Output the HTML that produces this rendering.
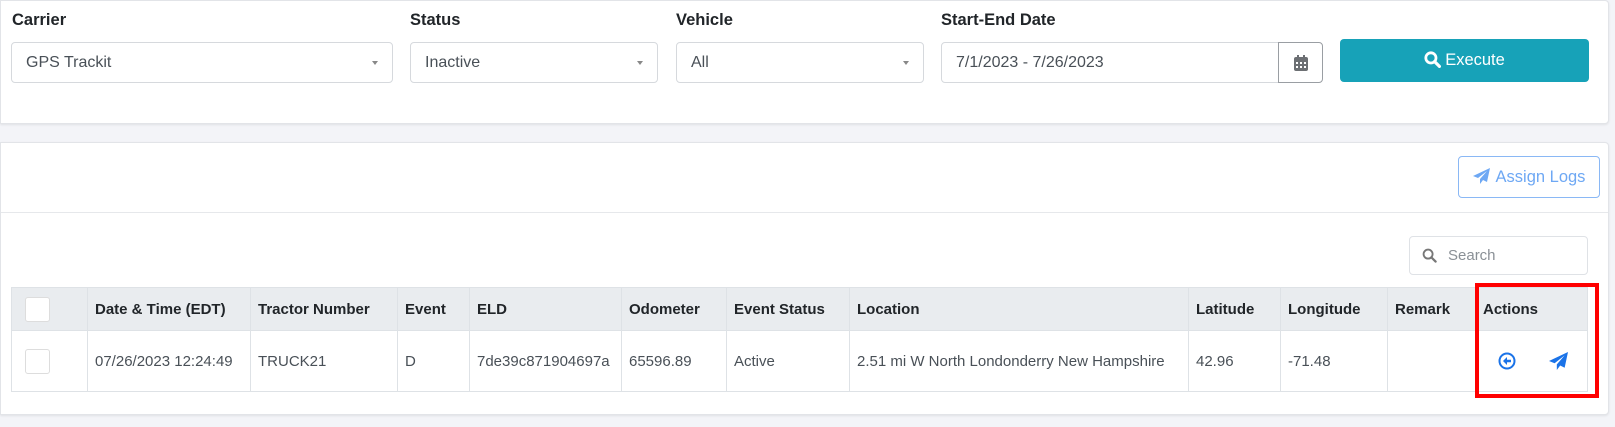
<!DOCTYPE html>
<html><head><meta charset="utf-8"><style>
*{box-sizing:border-box;margin:0;padding:0}
body{width:1615px;height:427px;background:#f3f4f8;font-family:"Liberation Sans",sans-serif;color:#212529;position:relative;overflow:hidden}
.card{position:absolute;left:0;width:1609px;background:#fff;border:1px solid #e2e4e8;border-radius:0 4px 4px 0;box-shadow:0 1px 2px rgba(0,0,0,.08)}
.lbl{position:absolute;top:10px;font-weight:bold;font-size:16.5px;color:#212529}
.sel{position:absolute;top:41px;height:41px;border:1px solid #d6d9dd;border-radius:4px;font-size:16px;color:#495057;padding:11px 14px}
.sel .car{position:absolute;right:14px;top:18px;border-left:3.5px solid transparent;border-right:3.5px solid transparent;border-top:4px solid #888}
.abs{position:absolute}
table{position:absolute;left:11px;top:287px;border-collapse:collapse;font-size:15px;table-layout:fixed}
th,td{border:1px solid #dee2e6;text-align:left;padding:0 7px;white-space:nowrap;overflow:hidden}
th{background:#e9ecef;height:43px;font-weight:bold;color:#212529}
td{height:61px;color:#495057}
.cb{width:25px;height:25px;border:1px solid #ddd;border-radius:3px;background:#fff;margin-left:6px}
</style></head><body>
<div class="card" style="top:0;height:124px">
 <div class="lbl" style="left:11px">Carrier</div>
 <div class="lbl" style="left:409px">Status</div>
 <div class="lbl" style="left:675px">Vehicle</div>
 <div class="lbl" style="left:940px">Start-End Date</div>
 <div class="sel" style="left:10px;width:382px">GPS Trackit<span class="car"></span></div>
 <div class="sel" style="left:409px;width:248px">Inactive<span class="car"></span></div>
 <div class="sel" style="left:675px;width:248px">All<span class="car"></span></div>
 <div class="sel" style="left:940px;width:338px;border-radius:4px 0 0 4px">7/1/2023 - 7/26/2023</div>
 <div class="abs" style="left:1277px;top:41px;width:45px;height:41px;border:1px solid #9a9ea3;border-radius:0 4px 4px 0;background:#fff">
  <svg width="14" height="16" viewBox="0 0 14 16" style="position:absolute;left:15px;top:12px"><rect x="0" y="2" width="14" height="14" rx="2" fill="#6c6f73"/><rect x="3" y="0" width="2" height="4" fill="#6c6f73"/><rect x="9" y="0" width="2" height="4" fill="#6c6f73"/><g fill="#fff"><rect x="2" y="7" width="2" height="2"/><rect x="6" y="7" width="2" height="2"/><rect x="10" y="7" width="2" height="2"/><rect x="2" y="11" width="2" height="2"/><rect x="6" y="11" width="2" height="2"/><rect x="10" y="11" width="2" height="2"/></g></svg>
 </div>
 <div class="abs" style="left:1339px;top:38px;width:249px;height:43px;background:#17a2b8;border-radius:4px;color:#fff;font-size:16.5px;text-align:center;line-height:43px">
  <svg width="17" height="17" viewBox="0 0 16 16" style="vertical-align:-3px;margin-right:4px"><circle cx="6.5" cy="6.5" r="4.8" fill="none" stroke="#fff" stroke-width="2.6"/><path d="M10 10l4.5 4.5" stroke="#fff" stroke-width="3" stroke-linecap="round"/></svg>Execute</div>
</div>
<div class="card" style="top:142px;height:273px">
 <div class="abs" style="left:1457px;top:13px;width:142px;height:42px;border:1px solid #8ab8f5;border-radius:4px;color:#6ea8f4;font-size:16.5px;line-height:40px;text-align:center">
  <svg width="17" height="16" viewBox="0 0 17 16" style="vertical-align:-2px;margin-right:6px"><path d="M17 0L0 8l5 2 9-7-7 8v5l3-4 4 2z" fill="#6ea8f4"/></svg>Assign Logs</div>
 <div class="abs" style="left:0;top:69px;width:1607px;height:1px;background:#e6e8eb"></div>
 <div class="abs" style="left:1408px;top:93px;width:179px;height:39px;border:1px solid #dfe2e6;border-radius:4px;font-size:15px;color:#8a9096;line-height:37px;padding-left:38px">Search
  <svg width="15" height="15" viewBox="0 0 16 16" style="position:absolute;left:12px;top:11px"><circle cx="6.5" cy="6.5" r="4.8" fill="none" stroke="#777" stroke-width="2"/><path d="M10 10l4.5 4.5" stroke="#777" stroke-width="2.4" stroke-linecap="round"/></svg></div>
</div>
<table>
<colgroup><col style="width:76px"><col style="width:163px"><col style="width:147px"><col style="width:72px"><col style="width:152px"><col style="width:105px"><col style="width:123px"><col style="width:339px"><col style="width:92px"><col style="width:107px"><col style="width:88px"><col style="width:112px"></colgroup>
<tr><th><div class="cb"></div></th><th>Date &amp; Time (EDT)</th><th>Tractor Number</th><th>Event</th><th>ELD</th><th>Odometer</th><th>Event Status</th><th>Location</th><th>Latitude</th><th>Longitude</th><th>Remark</th><th>Actions</th></tr>
<tr><td><div class="cb"></div></td><td>07/26/2023 12:24:49</td><td>TRUCK21</td><td>D</td><td>7de39c871904697a</td><td>65596.89</td><td>Active</td><td>2.51 mi W North Londonderry New Hampshire</td><td>42.96</td><td>-71.48</td><td></td><td style="position:relative">
 <svg width="18" height="18" viewBox="0 0 18 18" style="position:absolute;left:22px;top:21px"><circle cx="9" cy="9" r="7.5" fill="none" stroke="#1a73e8" stroke-width="2"/><path d="M9 5L5 9l4 4V10.2h4V7.8H9z" fill="#1a73e8"/></svg>
 <svg width="19" height="18" viewBox="0 0 17 16" style="position:absolute;left:73px;top:21px"><path d="M17 0L0 8l5 2 9-7-7 8v5l3-4 4 2z" fill="#1a73e8"/></svg>
</td></tr>
</table>
<div class="abs" style="left:1475px;top:283px;width:124px;height:115px;border:4px solid #f00"></div>
</body></html>
